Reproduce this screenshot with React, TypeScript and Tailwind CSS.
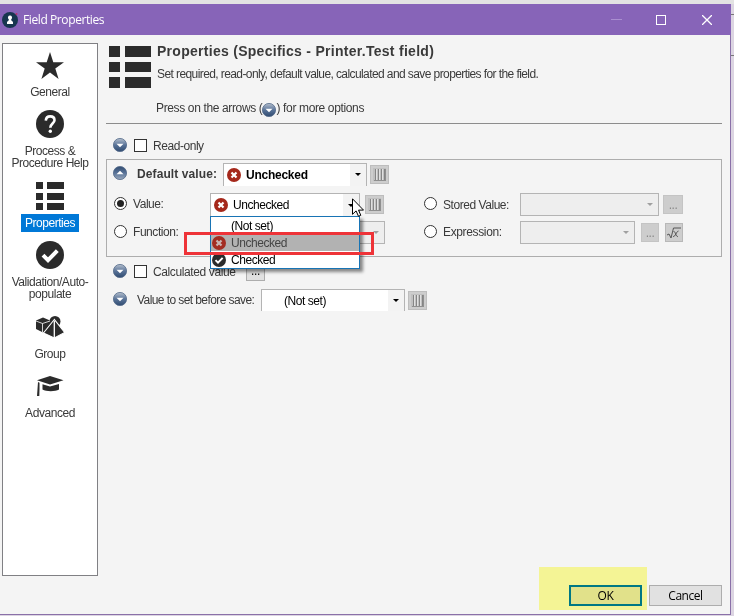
import type { ReactNode } from 'react';
import clsx from 'clsx';

function ListIcon({ small }: { small?: boolean }) {
  if (small) {
    return (
      <svg viewBox="0 0 28 28" className="w-7 h-7 shrink-0" fill="#2b2b2b" shapeRendering="crispEdges">
        <path d="M0 0h7v7H0zM11 0h17v7H11zM0 11h7v7H0zM11 11h17v7H11zM0 21h7v7H0zM11 21h17v7H11z" />
      </svg>
    );
  }
  return (
    <svg viewBox="0 0 42 42" className="w-[42px] h-[42px] shrink-0" fill="#2b2b2b" shapeRendering="crispEdges">
      <path d="M0 0h11v11H0zM16 0h26v11H16zM0 16h11v10H0zM16 16h26v10H16zM0 31h11v11H0zM16 31h26v11H16z" />
    </svg>
  );
}

function StarIcon() {
  return (
    <svg viewBox="0 0 28 28" className="w-7 h-7" fill="#2b2b2b">
      <path d="M14 0l3.3 10.2H28l-8.7 6.3 3.3 10.5L14 20.6 5.4 27l3.3-10.5L0 10.2h10.7z" />
    </svg>
  );
}

function HelpIcon() {
  return (
    <svg viewBox="0 0 28 28" className="w-7 h-7 shrink-0">
      <circle cx="14" cy="14" r="14" fill="#2b2b2b" />
      <path d="M9.800 10.600c.2-2.700 1.900-4.200 4.400-4.200 2.500 0 4.300 1.500 4.300 3.800 0 3.200-4.200 3.500-4.200 7.500" fill="none" stroke="#fff" strokeWidth="2.600" />
      <circle cx="14.300" cy="21.300" r="1.700" fill="#fff" />
    </svg>
  );
}

function CheckIcon({ className }: { className?: string }) {
  return (
    <svg viewBox="0 0 28 28" className={className}>
      <circle cx="14" cy="14" r="14" fill="#2b2b2b" />
      <path d="M7 14.200l5 5 9.300-9.500" fill="none" stroke="#fff" strokeWidth="4" />
    </svg>
  );
}

function CrossIcon({ dim }: { dim?: boolean }) {
  return (
    <svg viewBox="0 0 14 14" className="w-3.5 h-3.5 shrink-0">
      <circle cx="7" cy="7" r="7" fill={dim ? '#a32d22' : '#a5281b'} />
      <path d="M4.500 4.500l5 5M9.500 4.500l-5 5" stroke={dim ? '#c9b5b3' : '#fff'} strokeWidth="2.200" />
    </svg>
  );
}

function ShapesIcon() {
  return (
    <svg viewBox="0 0 28 22" className="w-7 h-[22px]">
      <circle cx="19" cy="5.500" r="5.500" fill="#2b2b2b" />
      <path d="M0 4.500L7 1.500l7 3v8.500L7 16.500 0 13z" fill="#2b2b2b" />
      <path d="M0 5l6.500 2.500L14 5M6.500 7.500v9" stroke="#fff" strokeWidth=".8" fill="none" />
      <path d="M18.300 3.500L7.500 17l10.800 5L28.800 16.500z" fill="#2b2b2b" stroke="#fff" strokeWidth="1.100" />
      <path d="M18.300 5v17" stroke="#fff" strokeWidth="1.300" />
    </svg>
  );
}

function CapIcon() {
  return (
    <svg viewBox="0 0 28 21" className="w-7 h-[21px]" fill="#2b2b2b">
      <path d="M14 0l13.500 4.200L14 8.500 1 4.200zM6.500 8.300L14 10.500l9-2.500v5.500c-3.500 2.300-13 2.300-16.500 0zM2 6l1.500.8V13l-.2 7H1l.5-7z" />
    </svg>
  );
}

function ArrowBall({ up }: { up?: boolean }) {
  return (
    <svg viewBox="0 0 14 14" className="w-3.5 h-3.5 shrink-0">
      <defs>
        <linearGradient id={up ? 'ballUp' : 'ballDown'} x1="0" y1="0" x2="0" y2="1">
          <stop offset="0" stopColor={up ? '#304b70' : '#b5bfcd'} />
          <stop offset=".5" stopColor="#5a7499" />
          <stop offset="1" stopColor={up ? '#9aa9bd' : '#304b70'} />
        </linearGradient>
      </defs>
      <circle cx="7" cy="7" r="6.600" fill={up ? 'url(#ballUp)' : 'url(#ballDown)'} stroke="#536a8a" strokeWidth=".8" />
      <path d={up ? 'M3.500 8.300h7L7 4.800z' : 'M3.500 5.800h7L7 9.300z'} fill="#fff" />
    </svg>
  );
}

function Caret({ disabled }: { disabled?: boolean }) {
  return (
    <svg viewBox="0 0 6 3" className="w-1.5 h-[3px]" fill={disabled ? '#a0a0a0' : '#000'}>
      <path d="M0 0h6L3 3z" />
    </svg>
  );
}

function Radio({ checked }: { checked?: boolean }) {
  return (
    <span className="w-[13px] h-[13px] shrink-0 rounded-full border border-[#333] bg-white flex items-center justify-center">
      {checked && <span className="w-[7px] h-[7px] rounded-full bg-[#222]" />}
    </span>
  );
}

function CheckBox() {
  return <span className="w-[13px] h-[13px] shrink-0 border border-[#333] bg-white" />;
}

function Combo({ className, children }: { className?: string; children?: ReactNode }) {
  return (
    <div className={clsx('flex shrink-0 border-t border-l border-r border-[#b4b4b4] bg-white text-black', className)}>
      <div className="flex-1 flex items-center">{children}</div>
      <div className="w-4 bg-[#f3f3f3] flex items-center justify-center">
        <Caret />
      </div>
    </div>
  );
}

function DisabledCombo({ className }: { className?: string }) {
  return (
    <div className={clsx('h-[23px] shrink-0 border border-[#b4b4b4] bg-[#eeeeee] flex items-center justify-end pr-[5px]', className)}>
      <Caret disabled />
    </div>
  );
}

function BarsButton() {
  return (
    <div className="w-[19px] h-[19px] shrink-0 border border-[#bdbdbd] bg-[#cdcdcd] flex items-center justify-center">
      <svg viewBox="0 0 13 13" className="w-[13px] h-[13px]" shapeRendering="crispEdges">
        <path d="M0 0h13v13H0z" fill="#c0c0c0" />
        <path d="M3.500 1v11M6.500 1v11M9.500 1v11" stroke="#e0e0e0" />
        <path d="M2.500 1v11M5.500 1v11M8.500 1v11M11.500 1v11" stroke="#858585" />
        <path d="M1 12.500h12M12.500 1v11" stroke="#8f8f8f" />
      </svg>
    </div>
  );
}

function DotsButton({ className }: { className?: string }) {
  return (
    <span className={clsx('h-[19px] shrink-0 border border-[#c4c4c4] bg-[#cdcdcd] text-center text-[#888] leading-[19px]', className)}>
      ...
    </span>
  );
}

function SideItem({ icon, className, children }: { icon: ReactNode; className: string; children: ReactNode }) {
  return (
    <div className={clsx('flex flex-col items-center text-center leading-3 whitespace-nowrap', className)}>
      {icon}
      {children}
    </div>
  );
}

export default function App() {
  return (
    <div className="relative w-[734px] h-[616px] overflow-hidden bg-[#dcd5e2] pt-1 font-['Liberation_Sans',Arial,sans-serif] text-[12px] tracking-[-0.45px] text-[#3a3a3a]">
      {/* Window behind the dialog */}
      <div className="absolute top-0 left-0 w-full h-1 bg-[#e3e3e3]" />
      <div className="absolute top-[14px] right-0 w-[3px] h-[42px] border-y border-[#777]" />

      <div className="w-[731px] h-[611px] bg-[#f4f4f4] border-r border-b border-[#8a70a8]">
        <header className="w-[731px] h-[31px] bg-[#8764b8] flex items-center text-white">
          <svg viewBox="0 0 16 16" className="w-4 h-4 ml-[2px]">
            <circle cx="8" cy="8" r="8" fill="#17364f" />
            <path d="M8 3.500a2 2 0 0 1 1.500 3.400l-.5 1L11 10v2H5v-2l2-2.100-.5-1A2 2 0 0 1 8 3.500z" fill="#fff" />
            <circle cx="14.500" cy="2" r="1" fill="#b8336a" />
          </svg>
          <span className="ml-[5px] font-['Open_Sans',sans-serif] text-[12px] tracking-[-0.4px]">Field Properties</span>
          <div className="ml-auto mr-[19px] flex items-center">
            <span className="w-[11px] h-px bg-[#aa8fd0] mr-[34px]" />
            <span className="w-[10px] h-[10px] border border-white mr-9" />
            <svg viewBox="0 0 10 10" className="w-[10px] h-[10px]">
              <path d="M0 0l10 10M10 0L0 10" stroke="#fff" strokeWidth="1.300" />
            </svg>
          </div>
        </header>

        <div className="flex h-[579px]">
          <aside className="ml-[2px] mt-2 w-24 h-[533px] shrink-0 border border-[#808084] bg-white">
            <SideItem className="pt-2 h-[66px] gap-[6px]" icon={<StarIcon />}>
              <span>General</span>
            </SideItem>
            <SideItem className="h-[72px] gap-[7px]" icon={<HelpIcon />}>
              <span>Process &amp;<br />Procedure Help</span>
            </SideItem>
            <SideItem className="h-[59px] gap-1" icon={<ListIcon small />}>
              <span className="h-[18px] w-[58px] bg-[#0078d7] leading-[18px] text-white">Properties</span>
            </SideItem>
            <SideItem className="h-[75px] gap-[7px]" icon={<CheckIcon className="w-7 h-7 shrink-0" />}>
              <span>Validation/Auto-<br />populate</span>
            </SideItem>
            <SideItem className="h-[60px] gap-[10px]" icon={<ShapesIcon />}>
              <span>Group</span>
            </SideItem>
            <SideItem className="gap-[10px]" icon={<CapIcon />}>
              <span>Advanced</span>
            </SideItem>
          </aside>

          <main className="ml-2 w-[616px] flex flex-col">
            <div className="h-[89px] shrink-0 border-b border-[#8c8c8c] pl-[3px] pt-[11px] flex">
              <ListIcon />
              <div className="pl-[6px] whitespace-nowrap">
                <h1 className="-mt-[3px] h-[22px] leading-4 text-[14px] font-bold tracking-[0.28px]">
                  Properties (Specifics - Printer.Test field)
                </h1>
                <p className="mt-px h-[17px] leading-[17px] tracking-[-0.59px]">
                  Set required, read-only, default value, calculated and save properties for the field.
                </p>
                <p className="mt-[17px] -ml-px h-4 flex items-center tracking-[-0.36px]">
                  Press on the arrows (
                  <span className="mt-[3px]"><ArrowBall /></span>
                  ) for more options
                </p>
              </div>
            </div>

            <div className="h-[35px] shrink-0 pt-[7px] pl-[7px] flex items-center">
              <ArrowBall />
              <span className="ml-[7px] mr-[6px] flex"><CheckBox /></span>
              <span className="mt-px">Read-only</span>
            </div>

            <section className="h-[98px] shrink-0 border border-[#adadad]">
              <div className="h-[27px] pt-px pl-[6px] flex items-center">
                <span className="-mt-[3px]"><ArrowBall up /></span>
                <span className="ml-[10px] w-[86px] text-[12px] font-bold tracking-[0.1px]">Default value:</span>
                <Combo className="w-[144px] h-[23px]">
                  <span className="ml-[3px] mr-[5px]"><CrossIcon /></span>
                  <span className="font-bold tracking-[-0.25px]">Unchecked</span>
                </Combo>
                <span className="ml-[3px]"><BarsButton /></span>
              </div>

              <div className="flex h-[34px] pt-px pl-[7px] items-center">
                <span className="-mt-[3px]"><Radio checked /></span>
                <span className="ml-[6px] w-[77px] -mt-[2px]">Value:</span>
                <Combo className="w-[150px] h-[23px]">
                  <span className="ml-[3px] mr-[5px]"><CrossIcon /></span>
                  Unchecked
                </Combo>
                <span className="ml-[5px] mr-10"><BarsButton /></span>
                <span className="-mt-[2px]"><Radio /></span>
                <span className="ml-[6px] w-[77px] tracking-[-0.45px]">Stored Value:</span>
                <DisabledCombo className="w-[139px]" />
                <DotsButton className="ml-1 w-5" />
              </div>

              <div className="flex h-[23px] pl-[7px] items-center">
                <span className="-mt-[2px]"><Radio /></span>
                <span className="ml-[6px] w-[77px] -mt-px">Function:</span>
                <DisabledCombo className="w-[175px]" />
                <span className="ml-[39px] -mt-[2px]"><Radio /></span>
                <span className="ml-[6px] w-[77px] -mt-px tracking-[-0.36px]">Expression:</span>
                <DisabledCombo className="w-[115px]" />
                <DotsButton className="ml-[6px] w-[18px]" />
                <span className="ml-[6px] w-[18px] h-[19px] shrink-0 border border-[#b8b8b8] bg-[#cdcdcd] flex items-center justify-center">
                  <svg viewBox="0 0 14 12" className="w-[14px] h-3" fill="none" stroke="#555">
                    <path d="M0 8l2-1 2 4L6.500 1H14" />
                    <path d="M6.500 4.500c2-1 2 5.500 4.500 5M11.500 4c-2 0-3 6-5.500 5.500" />
                  </svg>
                </span>
              </div>
            </section>

            <div className="h-7 shrink-0 pl-[7px] flex items-center tracking-[-0.38px]">
              <ArrowBall />
              <span className="ml-[7px] mr-[6px] flex"><CheckBox /></span>
              <span className="w-[93px] mt-px">Calculated value</span>
              <span className="w-[19px] h-[18px] mt-[2px] border border-[#adadad] bg-[#e1e1e1] text-center leading-[15px] text-black">...</span>
            </div>

            <div className="h-[30px] shrink-0 pl-[7px] flex items-center">
              <span className="-mt-[2px]"><ArrowBall /></span>
              <span className="ml-[10px] w-[124px] tracking-[-0.58px]">Value to set before save:</span>
              <Combo className="w-[144px] h-[22px]">
                <span className="ml-[22px] mt-px">(Not set)</span>
              </Combo>
              <span className="ml-[3px]"><BarsButton /></span>
            </div>

            <footer className="mt-auto mb-[8px] flex justify-end gap-[7px] text-[12px] text-black font-['Open_Sans',sans-serif]">
              <button className="w-[73px] h-[21px] border-2 border-[#0078d7] bg-[#e1e1e1] leading-[17px]">OK</button>
              <button className="w-[73px] h-[21px] border border-[#adadad] bg-[#e1e1e1] leading-[18px]">Cancel</button>
            </footer>
          </main>
        </div>
      </div>

      {/* Open list of the value combo */}
      <ul className="absolute left-[210px] top-[216px] w-[150px] h-[53px] border border-[#1874b5] bg-white text-black shadow-[3px_3px_3px_rgba(0,0,0,0.45)]">
        <li className="h-[17px] pl-5 leading-[18px]">(Not set)</li>
        <li className="h-[17px] pl-px flex items-center gap-[5px] bg-[#b2b2b2] text-[#444]">
          <CrossIcon dim />
          Unchecked
        </li>
        <li className="h-[17px] pl-px flex items-center gap-[5px]">
          <CheckIcon className="w-3.5 h-3.5" />
          Checked
        </li>
      </ul>

      {/* Marks */}
      <div className="absolute left-[184px] top-[232px] w-[190px] h-[23px] border-[3px] border-[#ee3338]" />
      <div className="absolute left-[539px] top-[567px] w-[108px] h-[43px] bg-[#ffff9c] mix-blend-multiply" />
      <svg viewBox="0 0 12 19" className="absolute left-[352px] top-[198px] w-3 h-[19px]">
        <path d="M.5.8v15.500l3.600-3.400 2.400 5.400 2.300-1-2.300-5.200h5z" fill="#fff" stroke="#000" />
      </svg>
    </div>
  );
}
